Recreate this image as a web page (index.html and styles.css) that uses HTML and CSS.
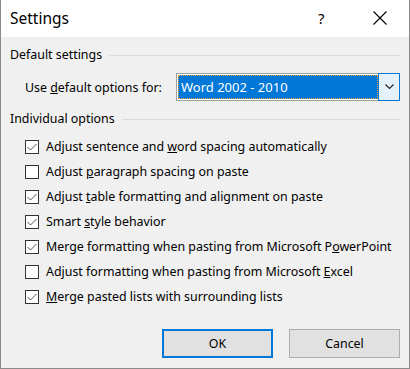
FILE: index.html
```html
<!DOCTYPE html>
<html>
<head>
    <title>Settings</title>
    <link rel="stylesheet" href="styles.css">
</head>
<body>
<div class="window">
    <div class="titlebar">
        <span class="title">Settings</span>
        <span class="help">?</span>
        <svg class="close" width="16" height="16" viewBox="0 0 16 16">
            <path d="M1.5 1.5 L14.5 14.5 M14.5 1.5 L1.5 14.5" stroke="#000" stroke-width="1.1" fill="none"/>
        </svg>
    </div>
    <div class="content">
        <div class="group-header">
            <span class="group-title">Default settings</span>
            <span class="group-line"></span>
        </div>
        <div class="default-row">
            <span class="row-label">Use <u>d</u>efault options for:</span>
            <div class="combo">
                <div class="combo-value"><span class="combo-text">Word 2002 - 2010</span></div>
                <div class="combo-button">
                    <svg width="9" height="6" viewBox="0 0 9 6">
                        <path d="M0.5 0.5 L4.5 4.5 L8.5 0.5" stroke="#222" stroke-width="1.1" fill="none"/>
                    </svg>
                </div>
            </div>
        </div>
        <div class="group-header second">
            <span class="group-title">Individual options</span>
            <span class="group-line"></span>
        </div>
        <div class="options">
            <label class="option"><span class="box checked"></span><span>Adjust sentence and <u>w</u>ord spacing automatically</span></label>
            <label class="option"><span class="box"></span><span>Adjust <u>p</u>aragraph spacing on paste</span></label>
            <label class="option"><span class="box checked"></span><span>Adjust <u>t</u>able formatting and alignment on paste</span></label>
            <label class="option"><span class="box checked"></span><span>Smart <u>s</u>tyle behavior</span></label>
            <label class="option"><span class="box checked"></span><span>Merge formatting when pasting from Microsoft P<u>o</u>werPoint</span></label>
            <label class="option"><span class="box"></span><span>Adjust formatting when pasting from Microsoft <u>E</u>xcel</span></label>
            <label class="option"><span class="box checked"></span><span><u>M</u>erge pasted lists with surrounding lists</span></label>
        </div>
        <div class="buttons">
            <button class="btn btn-default">OK</button>
            <button class="btn">Cancel</button>
        </div>
    </div>
</div>
</body>
</html>
```

FILE: styles.css
```css
html, body {
    margin: 0;
    padding: 0;
}
body {
    font-family: "Noto Sans", "Open Sans", sans-serif;
    font-size: 12.4px;
    color: #000;
    background: #f0f0f0;
}
.window {
    box-sizing: border-box;
    width: 410px;
    height: 369px;
    border: 1px solid #8a8a8a;
    border-top: none;
    background: #f0f0f0;
    display: flex;
    flex-direction: column;
}
.titlebar {
    height: 37px;
    background: #fff;
    display: flex;
    align-items: center;
    padding-left: 9px;
}
.title {
    font-size: 15.5px;
    flex: 1;
    margin-top: -2px;
}
.help {
    font-size: 15px;
    width: 12px;
    margin-right: 42px;
    margin-top: -2px;
}
.close {
    margin-right: 21px;
    margin-top: -2px;
}
.content {
    padding: 10px 9px 0 9px;
    display: flex;
    flex-direction: column;
}
.group-header {
    display: flex;
    align-items: center;
    height: 16px;
    line-height: 16px;
}
.group-header.second {
    margin-top: 10px;
}
.group-title {
    margin-right: 7px;
}
.group-line {
    flex: 1;
    height: 1px;
    background: #dcdcdc;
    margin-top: 1px;
}
.default-row {
    display: flex;
    align-items: center;
    margin-top: 10px;
    padding-left: 15px;
}
.row-label {
    width: 151px;
}
.combo {
    box-sizing: border-box;
    width: 224px;
    height: 28px;
    border: 1px solid #a0a0a0;
    background: #fff;
    display: flex;
}
.combo-value {
    flex: 1;
    padding: 1px 0 1px 1px;
    display: flex;
}
.combo-text {
    flex: 1;
    box-sizing: border-box;
    background: #0078d7;
    color: #fff;
    border: 1px dotted #f7a13c;
    font-size: 13px;
    line-height: 22px;
    padding-left: 2px;
}
.combo-button {
    box-sizing: border-box;
    width: 22px;
    margin: -1px -1px -1px 0;
    border: 1px solid #0078d7;
    background: #e5f1fb;
    display: flex;
    align-items: center;
    justify-content: center;
}
.options {
    display: flex;
    flex-direction: column;
    margin-top: 7px;
    padding-left: 15px;
}
.option {
    display: flex;
    align-items: center;
    height: 25px;
}
.box {
    box-sizing: border-box;
    width: 14px;
    height: 14px;
    border: 1px solid #333;
    background: #fff;
    margin-right: 7px;
    flex-shrink: 0;
}
.box.checked {
    background: #fff url("data:image/svg+xml,%3Csvg xmlns='http://www.w3.org/2000/svg' width='12' height='12' viewBox='0 0 12 12'%3E%3Cpath d='M1.5 6 L4.5 9 L10.5 3' stroke='%23555' stroke-width='1' fill='none'/%3E%3C/svg%3E") no-repeat center;
}
.buttons {
    display: flex;
    justify-content: flex-end;
    gap: 16px;
    margin-top: 20px;
}
.btn {
    box-sizing: border-box;
    width: 111px;
    height: 29px;
    font-family: inherit;
    font-size: 12.4px;
    background: #e1e1e1;
    border: 1px solid #adadad;
    padding: 0;
    color: #000;
}
.btn-default {
    border: 2px solid #0078d7;
}
```
